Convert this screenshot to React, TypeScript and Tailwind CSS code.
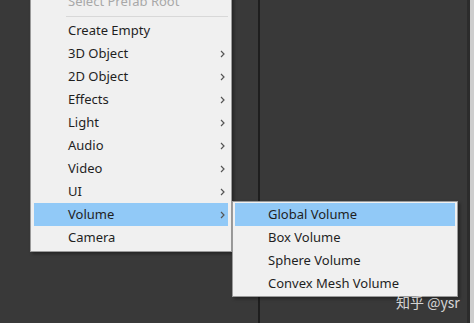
import React from "react";

const Chevron = () => (
  <svg width="5" height="8" viewBox="0 0 5 8" className="block">
    <polyline points="1,1 4,4 1,7" fill="none" stroke="#555" strokeWidth="1.2" />
  </svg>
);

type Item = { label: string; sub?: boolean; active?: boolean };

const items: Item[] = [
  { label: "Create Empty" },
  { label: "3D Object", sub: true },
  { label: "2D Object", sub: true },
  { label: "Effects", sub: true },
  { label: "Light", sub: true },
  { label: "Audio", sub: true },
  { label: "Video", sub: true },
  { label: "UI", sub: true },
  { label: "Volume", sub: true, active: true },
  { label: "Camera" },
];

const subItems = ["Global Volume", "Box Volume", "Sphere Volume", "Convex Mesh Volume"];

export default function App() {
  const font = { fontFamily: '"Noto Sans", "Open Sans", sans-serif' };
  return (
    <div className="relative w-[474px] h-[323px] overflow-hidden bg-[#393939]" style={font}>
      {/* background panels */}
      <div className="flex h-full">
        <div className="w-[258px] h-full bg-[#393939]" />
        <div className="w-[2px] h-full bg-[#1e1e1e]" />
        <div className="flex-1 h-full bg-[#393939]" />
        <div className="w-[3px] h-full bg-[#2c2c2c]" />
        <div className="w-[4px] h-full bg-[#cdcdcd]" />
      </div>

      {/* main menu */}
      <div className="absolute left-[30px] top-[-13px] w-[202px] border border-[#9a9a9a] bg-[#f0f0f0] px-[3px] py-[2px] shadow-[2px_2px_3px_rgba(0,0,0,0.35)]">
        <div className="h-[23px] flex items-center pl-[34px] text-[13px] text-[#a8a8a8]">Select Prefab Root</div>
        <div className="h-[6px] flex items-center pl-[32px]">
          <div className="h-px w-full bg-[#d8d8d8]" />
        </div>
        {items.map((it) => (
          <div
            key={it.label}
            className={`h-[23px] flex items-center justify-between pl-[34px] pr-[3px] text-[13px] text-[#1f1f1f] ${it.active ? "bg-[#91c9f7]" : ""}`}
          >
            <span>{it.label}</span>
            {it.sub ? <Chevron /> : null}
          </div>
        ))}
      </div>

      {/* submenu */}
      <div className="absolute left-[232px] top-[201px] w-[226px] border border-[#9a9a9a] bg-[#f0f0f0] px-[2px] py-[1px] shadow-[2px_2px_3px_rgba(0,0,0,0.35)]">
        {subItems.map((s, i) => (
          <div
            key={s}
            className={`h-[23px] flex items-center pl-[33px] text-[13px] text-[#1f1f1f] ${i === 0 ? "bg-[#91c9f7]" : ""}`}
          >
            {s}
          </div>
        ))}
      </div>

      {/* watermark */}
      <div
        className="absolute left-[396px] top-[292px] text-[14px] leading-[20px] text-[rgba(255,255,255,0.8)]"
        style={{ fontFamily: '"Noto Sans CJK SC", "Noto Sans", sans-serif' }}
      >
        知乎 @ysr
      </div>
    </div>
  );
}
